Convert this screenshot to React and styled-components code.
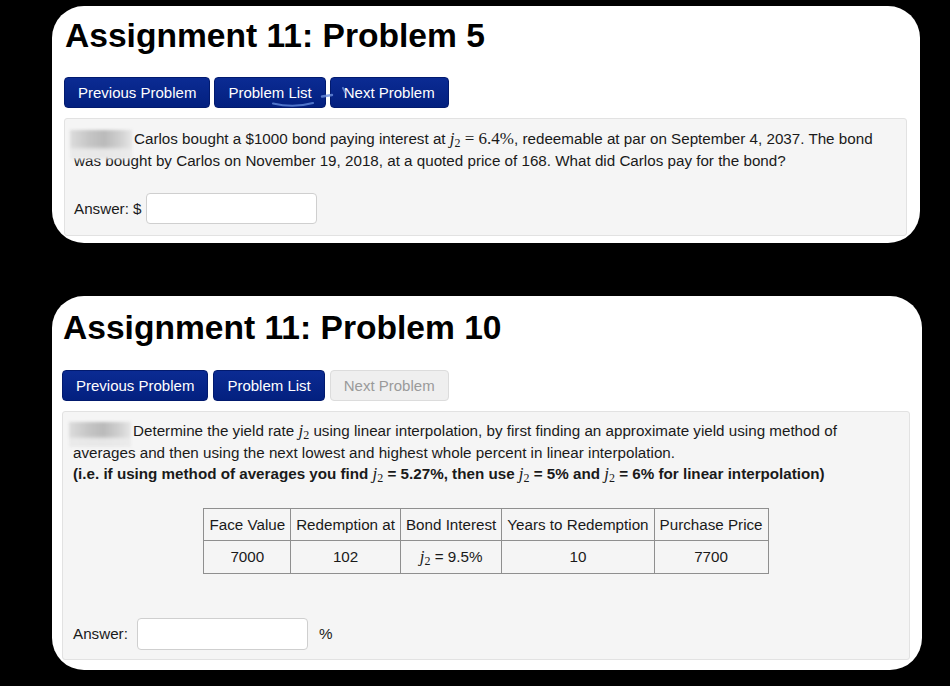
import React from 'react';
import styled, { createGlobalStyle } from 'styled-components';

const GlobalStyle = createGlobalStyle`
  body {
    margin: 0;
    background: #000;
    font-family: "Liberation Sans", Helvetica, Arial, sans-serif;
    color: #111;
  }
`;

const Page = styled.div`
  display: flex;
  flex-direction: column;
  gap: 53px;
  padding: 6px 0 0 52px;
`;

const Card = styled.section`
  background: #fff;
  border-radius: 32px;
  box-sizing: border-box;
  width: ${p => p.$width}px;
  padding: ${p => p.$top}px ${p => p.$right}px ${p => p.$bottom}px ${p => p.$left}px;
`;

const Title = styled.h1`
  margin: 0 0 ${p => p.$gap}px 1px;
  font-size: 33.6px;
  line-height: 38px;
  font-weight: bold;
  color: #000;
`;

const ButtonRow = styled.div`
  position: relative;
  display: flex;
  gap: ${p => p.$gap}px;
  margin-bottom: 10px;
`;

const NavButton = styled.button`
  height: 31px;
  padding: 0 13px;
  font-family: inherit;
  font-size: 15px;
  border-radius: 4px;
  color: ${p => (p.disabled ? '#9a9a9a' : '#fff')};
  background: ${p => (p.disabled ? '#efefef' : 'linear-gradient(#0b2b93, #03207f)')};
  border: 1px solid ${p => (p.disabled ? '#dcdcdc' : '#021a6e')};
  cursor: ${p => (p.disabled ? 'default' : 'pointer')};
`;

const PenMarks = styled.svg`
  position: absolute;
  left: 0;
  top: 0;
  pointer-events: none;
`;

const ProblemBox = styled.div`
  background: #f5f5f5;
  border: 1px solid #e2e2e2;
  border-radius: 3px;
  padding: ${p => p.$pad};
  font-size: 15.2px;
  line-height: 21.5px;
  color: #1a1a1a;
`;

const Redacted = styled.span`
  position: relative;
  display: inline-block;
  width: 62px;
  height: 14px;
  margin: 0 2px 0 -4px;
  vertical-align: -2px;
  &::after {
    content: '';
    position: absolute;
    left: 0;
    top: -2px;
    width: 62px;
    height: ${p => p.$tall}px;
    background:
      linear-gradient(180deg, rgba(245, 245, 245, 0) 55%, rgba(236, 236, 236, 0.9) 70%),
      linear-gradient(90deg, #dcdcdc 0%, #c6c6c6 30%, #bababa 55%, #cfcfcf 80%, #e6e6e6 100%);
    filter: blur(1.5px);
  }
`;

const MathText = styled.span`
  font-family: "Liberation Serif", "DejaVu Serif", serif;
  font-size: 17px;
  line-height: 1;
`;

const MathVar = styled.span`
  font-family: "Liberation Serif", "DejaVu Serif", serif;
  font-style: italic;
  font-weight: normal;
  font-size: 17px;
  line-height: 1;
  sub {
    font-style: normal;
    font-size: 12px;
    line-height: 0;
    vertical-align: -3px;
  }
`;

const Bold = styled.b`
  font-weight: bold;
`;

const DataTable = styled.table`
  border-collapse: collapse;
  margin: ${p => p.$top}px auto 0;
  font-size: 15.2px;
  th,
  td {
    border: 1px solid #8f8f8f;
    padding: 5px 5px;
    line-height: 21.5px;
    font-weight: normal;
    white-space: nowrap;
  }
  td {
    text-align: center;
  }
`;

const AnswerRow = styled.div`
  display: flex;
  align-items: center;
  gap: ${p => p.$gap}px;
  margin-top: ${p => p.$top}px;
`;

const AnswerInput = styled.input`
  box-sizing: border-box;
  width: 171px;
  height: ${p => p.$h}px;
  border: 1px solid #cfcfcf;
  border-radius: 4px;
  background: #fff;
  font-size: 14px;
`;

const Unit = styled.span`
  margin-left: 2px;
`;

const J2 = () => (
  <MathVar>
    j<sub>2</sub>
  </MathVar>
);

const tableHead = ['Face Value', 'Redemption at', 'Bond Interest', 'Years to Redemption', 'Purchase Price'];

function Navigation({ nextDisabled, marked, gap }) {
  return (
    <ButtonRow $gap={gap}>
      <NavButton>Previous Problem</NavButton>
      <NavButton>Problem List</NavButton>
      <NavButton disabled={nextDisabled}>Next Problem</NavButton>
      {marked && (
        <PenMarks width="300" height="36" viewBox="0 0 300 36">
          <path d="M209 26.5 C 220 29, 236 29.5, 249 26" stroke="#5d82d6" strokeWidth="2.2" fill="none" strokeLinecap="round" opacity="0.85" />
          <path d="M258 19.5 L 268 18" stroke="#6c8fdc" strokeWidth="2.4" fill="none" strokeLinecap="round" opacity="0.8" />
          <path d="M279 11 L 281 15" stroke="#7a9ae0" strokeWidth="2" fill="none" strokeLinecap="round" opacity="0.7" />
        </PenMarks>
      )}
    </ButtonRow>
  );
}

export default function App() {
  return (
    <>
      <GlobalStyle />
      <Page>
        <Card $width={868} $top={11} $right={13} $bottom={7} $left={12}>
          <Title $gap={22}>Assignment 11: Problem 5</Title>
          <Navigation marked gap={4} />
          <ProblemBox $pad="9px 10px 11px 9px">
            <Redacted $tall={29} />
            Carlos bought a $1000 bond paying interest at <J2 /> <MathText>= 6.4%</MathText>, redeemable at par on
            September 4, 2037. The bond was bought by Carlos on November 19, 2018, at a quoted price of 168. What did
            Carlos pay for the bond?
            <AnswerRow $gap={4} $top={22}>
              <span>Answer: $</span>
              <AnswerInput $h={31} />
            </AnswerRow>
          </ProblemBox>
        </Card>

        <Card $width={870} $top={13} $right={12} $bottom={10} $left={10}>
          <Title $gap={23}>Assignment 11: Problem 10</Title>
          <Navigation nextDisabled gap={5} />
          <ProblemBox $pad="8px 10px 9px 10px">
            <Redacted $tall={25} />
            Determine the yield rate <J2 /> using linear interpolation, by first finding an approximate yield using
            method of averages and then using the next lowest and highest whole percent in linear interpolation.
            <br />
            <Bold>
              (i.e. if using method of averages you find <J2 /> = 5.27%, then use <J2 /> = 5% and <J2 /> = 6% for linear
              interpolation)
            </Bold>
            <DataTable $top={23}>
              <thead>
                <tr>
                  {tableHead.map(h => (
                    <th key={h}>{h}</th>
                  ))}
                </tr>
              </thead>
              <tbody>
                <tr>
                  <td>7000</td>
                  <td>102</td>
                  <td>
                    <J2 /> = 9.5%
                  </td>
                  <td>10</td>
                  <td>7700</td>
                </tr>
              </tbody>
            </DataTable>
            <AnswerRow $gap={9} $top={44}>
              <span>Answer:</span>
              <AnswerInput $h={32} />
              <Unit>%</Unit>
            </AnswerRow>
          </ProblemBox>
        </Card>
      </Page>
    </>
  );
}
